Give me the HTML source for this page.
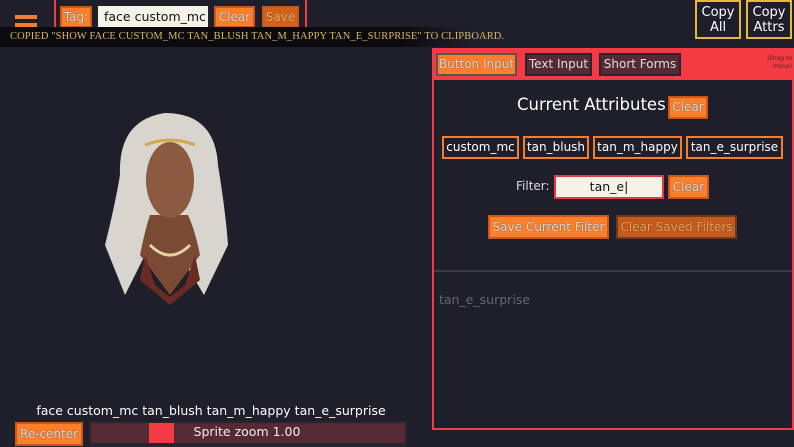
<!DOCTYPE html>
<html><head><style>
body{margin:0;width:794px;height:447px;background:#1f1e2b;position:relative;overflow:hidden;font-family:"DejaVu Sans","Liberation Sans",sans-serif;color:#fff}
.a{position:absolute;box-sizing:border-box;white-space:nowrap}
.ob{background:#fd7f2a;border:2px solid #c9581a;color:#ddd;text-shadow:0 0 1px #333;font-size:12px;text-align:center}
.tag{border:2px solid #f47e2d;color:#fff;font-size:12px;text-align:center;line-height:19px;background:#1f1e2b}
</style></head><body>
<div class="a" style="left:15px;top:15px;width:22px;height:4px;background:#f47e2d"></div>
<div class="a" style="left:15px;top:23px;width:22px;height:4px;background:#f47e2d"></div>
<div class="a" style="left:15px;top:31px;width:22px;height:4px;background:#f47e2d"></div>
<div class="a" style="left:54px;top:0;width:253px;height:34px;border:2px solid #f33b44;border-top:none"></div>
<div class="a ob" style="left:60px;top:6px;width:32px;height:22px;line-height:18px">Tag:</div>
<div class="a" style="left:98px;top:6px;width:110px;height:22px;background:#f5f3e8;color:#111;font-size:12.5px;line-height:22px;padding-left:6px;overflow:hidden">face custom_mc</div>
<div class="a ob" style="left:214px;top:6px;width:41px;height:22px;line-height:18px">Clear</div>
<div class="a ob" style="left:262px;top:6px;width:37px;height:22px;line-height:18px;background:#d0621b;color:#f5b060">Save</div>
<div class="a" style="left:0;top:27px;width:470px;height:20px;background:linear-gradient(90deg,#0b0a0e 85%,rgba(11,10,14,0));color:#d9b865;font-family:'Liberation Serif',serif;font-size:10.5px;line-height:20px;padding-left:10px;text-transform:uppercase;letter-spacing:0.1px">Copied "show face custom_mc tan_blush tan_m_happy tan_e_surprise" to clipboard.</div>
<div class="a" style="left:695px;top:0;width:46px;height:39px;border:2px solid #e6b83d;font-size:13px;text-align:center;line-height:15px;padding-top:3px">Copy<br>All</div>
<div class="a" style="left:746px;top:0;width:46px;height:39px;border:2px solid #e6b83d;font-size:13px;text-align:center;line-height:15px;padding-top:3px">Copy<br>Attrs</div>
<div class="a" style="left:432px;top:48px;width:362px;height:32px;background:#f33b44"></div>
<div class="a ob" style="left:436px;top:53px;width:81px;height:23px;line-height:19px;border-color:#555">Button Input</div>
<div class="a" style="left:525px;top:53px;width:67px;height:23px;background:#562a33;border:2px solid #2a2430;font-size:12px;text-align:center;line-height:19px;color:#ddd">Text Input</div>
<div class="a" style="left:599px;top:53px;width:82px;height:23px;background:#562a33;border:2px solid #2a2430;font-size:12px;text-align:center;line-height:19px;color:#ddd">Short Forms</div>
<div class="a" style="left:760px;top:55px;width:32px;font-size:6px;color:#5a2020;text-align:right;line-height:8px;white-space:normal">(Drag to move)</div>
<div class="a" style="left:432px;top:80px;width:362px;height:350px;border:2px solid #f33b44;border-top:none"></div>
<div class="a" style="left:517px;top:95px;font-size:16.5px">Current Attributes</div>
<div class="a ob" style="left:668px;top:96px;width:40px;height:23px;line-height:19px">Clear</div>
<div class="a tag" style="left:442px;top:136px;width:77px;height:23px">custom_mc</div>
<div class="a tag" style="left:523px;top:136px;width:66px;height:23px">tan_blush</div>
<div class="a tag" style="left:593px;top:136px;width:89px;height:23px">tan_m_happy</div>
<div class="a tag" style="left:686px;top:136px;width:97px;height:23px">tan_e_surprise</div>
<div class="a" style="left:516px;top:179px;font-size:12px;color:#ddd">Filter:</div>
<div class="a" style="left:554px;top:175px;width:110px;height:24px;background:#f5f3e8;border:2px solid #e53a44;color:#111;font-size:12.5px;text-align:center;line-height:20px">tan_e|</div>
<div class="a ob" style="left:668px;top:175px;width:41px;height:24px;line-height:20px">Clear</div>
<div class="a ob" style="left:488px;top:215px;width:121px;height:24px;line-height:20px">Save Current Filter</div>
<div class="a ob" style="left:616px;top:215px;width:121px;height:24px;line-height:20px;background:#c45a1b;border-color:#6a3a1e;color:#f0a050">Clear Saved Filters</div>
<div class="a" style="left:434px;top:270px;width:358px;height:2px;background:#3b3a46"></div>
<div class="a" style="left:439px;top:292px;font-size:12.5px;color:#666670">tan_e_surprise</div>
<svg class="a" style="left:100px;top:105px" width="135" height="205">
<path d="M20 70 Q18 15 65 8 Q115 8 118 60 Q126 110 128 140 L104 190 L80 150 L45 150 L25 190 L5 140 Q15 100 20 70Z" fill="#d8d4ce"/>
<path d="M40 150 Q45 125 50 110 L88 110 Q95 125 100 150 L70 190Z" fill="#7a4a34"/>
<path d="M45 150 L55 180 L70 192 L85 180 L95 150 L100 175 L70 200 L40 175Z" fill="#6a2c22"/>
<ellipse cx="70" cy="75" rx="24" ry="38" fill="#8b5a40"/>
<path d="M45 40 Q70 30 95 40" stroke="#d6a64a" stroke-width="3" fill="none"/>
<path d="M50 140 Q70 160 90 140" stroke="#e6d2a0" stroke-width="3" fill="none"/>
</svg>
<div class="a" style="left:0;top:403px;width:422px;text-align:center;font-size:12.5px">face custom_mc tan_blush tan_m_happy tan_e_surprise</div>
<div class="a ob" style="left:15px;top:422px;width:68px;height:24px;line-height:20px">Re-center</div>
<div class="a" style="left:89px;top:421px;width:318px;height:26px;background:#26252f"></div>
<div class="a" style="left:91px;top:423px;width:314px;height:20px;background:#562a33"></div>
<div class="a" style="left:149px;top:423px;width:25px;height:20px;background:#f33b44"></div>
<div class="a" style="left:174px;top:424px;width:146px;text-align:center;font-size:12.5px;color:#eee">Sprite zoom 1.00</div>
</body></html>
